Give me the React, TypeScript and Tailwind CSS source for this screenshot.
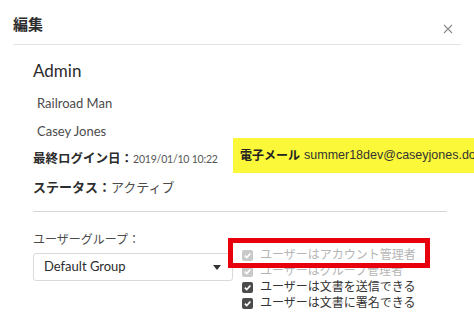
import React from 'react';

const jp = { fontFamily: '"Lato", "Noto Sans CJK JP", sans-serif' };

const Check = ({ disabled }: { disabled?: boolean }) => (
  <span
    className={`flex h-[11px] w-[11px] shrink-0 items-center justify-center rounded-[2px] ${
      disabled ? 'bg-[#c9c9c9]' : 'bg-[#4b4b4b]'
    }`}
  >
    <svg width="9" height="9" viewBox="0 0 10 10">
      <path d="M2 5.2 L4.2 7.3 L8.2 2.8" fill="none" stroke="#fff" strokeWidth="1.8" />
    </svg>
  </span>
);

const perms = [
  { label: 'ユーザーはアカウント管理者', disabled: true },
  { label: 'ユーザーはグループ管理者', disabled: true },
  { label: 'ユーザーは文書を送信できる' },
  { label: 'ユーザーは文書に署名できる' },
];

const App = () => {
  return (
    <div className="relative h-[320px] w-[474px] overflow-hidden bg-white text-[#4b4b4b]" style={jp}>
      {/* header */}
      <div className="mx-[13px] flex h-[45px] items-start justify-between border-b border-[#e3e3e3] pt-[14px]">
        <h1 className="text-[15px] font-bold leading-[20px] text-[#2c2c2c]">編集</h1>
        <button className="mr-[8px] mt-[10px] text-[#8a8a8a]">
          <svg width="10" height="10" viewBox="0 0 10 10">
            <path d="M1 1 L9 9 M9 1 L1 9" stroke="currentColor" strokeWidth="1.1" />
          </svg>
        </button>
      </div>

      {/* body */}
      <div className="pl-[33px]">
        <div className="mt-[14px] text-[17px] leading-[24px] text-[#2c2c2c]">Admin</div>
        <div className="mt-[10px] pl-[4px] text-[13px] leading-[20px]">Railroad Man</div>
        <div className="mt-[8px] pl-[4px] text-[13px] leading-[20px]">Casey Jones</div>

        <div className="mt-[8px] flex items-start">
          <div className="w-[200px] shrink-0 text-[12.5px] leading-[20px] whitespace-nowrap">
            <span className="font-bold text-[#2c2c2c]">最終ログイン日</span>
            <span className="font-bold text-[#2c2c2c]">：</span>
            <span className="text-[10.5px] tracking-[-0.2px] text-[#555]">2019/01/10 10:22</span>
          </div>
          <div className="-mt-[11px] flex h-[35px] shrink-0 items-center gap-[4px] bg-[#fbf83a] pl-[7px] pr-[10px] whitespace-nowrap">
            <span className="text-[12px] font-bold text-[#222]">電子メール</span>
            <span className="text-[12.5px] text-[#333]" style={{ fontFamily: '"Liberation Sans", Arial, sans-serif' }}>
              summer18dev@caseyjones.dom
            </span>
          </div>
        </div>

        <div className="mt-[4px] text-[13px] leading-[20px]">
          <span className="font-bold text-[#2c2c2c]">ステータス：</span>
          <span>アクティブ</span>
        </div>

        <div className="mt-[14px] w-[414px] border-t border-[#d6d6d6]" />

        <div className="mt-[18px] flex gap-[9px]">
          <div className="w-[200px] shrink-0">
            <div className="text-[12px] leading-[20px]">ユーザーグループ：</div>
            <div className="mt-[3px] flex h-[28px] items-center justify-between rounded-[3px] border border-[#dadada] pl-[10px] pr-[11px]">
              <span className="text-[13px] text-[#2c2c2c]">Default Group</span>
              <svg width="8" height="5" viewBox="0 0 8 5">
                <path d="M0 0 H8 L4 5 Z" fill="#333" />
              </svg>
            </div>
          </div>
          <div className="mt-[17px] flex flex-col">
            {perms.map((p) => (
              <div key={p.label} className="flex h-[16px] items-center gap-[7px] whitespace-nowrap">
                <Check disabled={p.disabled} />
                <span className={`text-[12px] ${p.disabled ? 'text-[#b5b5b5]' : 'text-[#333]'}`}>{p.label}</span>
              </div>
            ))}
          </div>
        </div>
      </div>

      {/* annotation highlight */}
      <div className="absolute left-[228px] top-[238px] h-[30px] w-[202px] border-[5px] border-[#e8000d]" />
    </div>
  );
};

export default App;
